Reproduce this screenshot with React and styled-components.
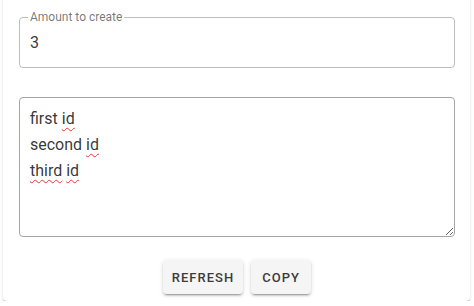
import React from "react"
import styled, { createGlobalStyle } from "styled-components"

const GlobalStyle = createGlobalStyle`
  body {
    margin: 0;
    background: #fff;
    font-family: Roboto, "Noto Sans", sans-serif;
    color: rgba(0, 0, 0, 0.8);
  }
`

const Card = styled.div`
  margin: -8px 4px 0 3px;
  padding: 18px 15px 7px 16px;
  background: #fff;
  border-radius: 4px;
  box-shadow: 0 2px 1px -1px rgba(0,0,0,0.2), 0 1px 1px 0 rgba(0,0,0,0.14),
    0 1px 3px 0 rgba(0,0,0,0.12);
  display: flex;
  flex-direction: column;
`

const Field = styled.fieldset`
  margin: 0;
  padding: 0 10px;
  border: 1px solid #bdbdbd;
  border-radius: 4px;

  legend {
    margin-left: -2px;
    padding: 0 2px;
    font-size: 12px;
    line-height: 14px;
    color: rgba(0, 0, 0, 0.55);
  }
`

const ValueInput = styled.input`
  display: block;
  width: 100%;
  box-sizing: border-box;
  border: 0;
  outline: none;
  padding: 6px 0 13px;
  height: 43px;
  font: 16px/24px Roboto, sans-serif;
  color: rgba(0, 0, 0, 0.8);
  background: transparent;
`

const IdsBox = styled.div`
  margin-top: 29px;
  height: 140px;
  box-sizing: border-box;
  border: 1px solid #a5a5a5;
  border-radius: 4px;
  padding: 8px 10px;
  font-size: 16px;
  line-height: 26px;
  color: rgba(0, 0, 0, 0.8);
  overflow: auto;
  resize: vertical;
`

const Misspelled = styled.span`
  text-decoration: underline wavy #e53935;
  text-decoration-thickness: 1px;
  text-underline-offset: 3px;
  text-decoration-skip-ink: none;
`

const Actions = styled.div`
  margin-top: 23px;
  display: flex;
  justify-content: center;
  gap: 8px;
`

const Button = styled.button`
  height: 34px;
  min-width: 60px;
  padding: 0 9px;
  border: 0;
  border-radius: 4px;
  background: #f5f5f5;
  color: #3c3c3c;
  font: 500 13px Roboto, sans-serif;
  letter-spacing: 1px;
  text-transform: uppercase;
  box-shadow: 0 3px 1px -2px rgba(0,0,0,0.2), 0 2px 2px 0 rgba(0,0,0,0.14),
    0 1px 5px 0 rgba(0,0,0,0.12);
  cursor: pointer;
`

export default function App() {
  return (
    <>
      <GlobalStyle />
      <Card>
        <Field>
          <legend>Amount to create</legend>
          <ValueInput defaultValue="3" />
        </Field>
        <IdsBox>
          <div>first <Misspelled>id</Misspelled></div>
          <div>second <Misspelled>id</Misspelled></div>
          <div><Misspelled>third</Misspelled> <Misspelled>id</Misspelled></div>
        </IdsBox>
        <Actions>
          <Button>Refresh</Button>
          <Button>Copy</Button>
        </Actions>
      </Card>
    </>
  )
}
